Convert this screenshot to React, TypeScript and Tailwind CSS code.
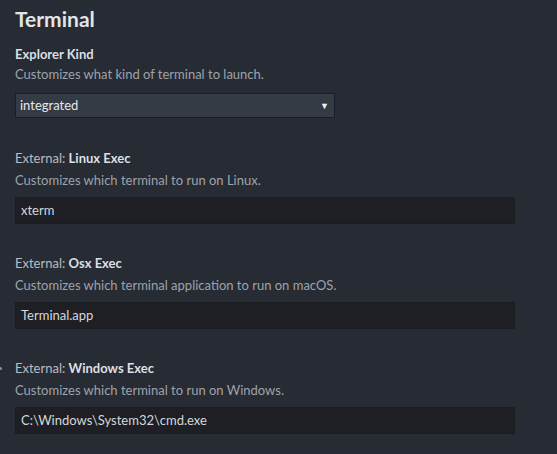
import React from "react";

const font = { fontFamily: 'Lato, "Open Sans", sans-serif' };

function Block({ prefix, name, desc, value, last }: { prefix?: string; name: string; desc: string; value: string; last?: boolean }) {
  return (
    <div className={last ? "" : "mb-[29px]"}>
      <div className="h-5 leading-5 text-[13px] text-[#b9bdc4]">
        {prefix && <span>{prefix} </span>}
        <span className="font-bold text-[#dcdfe4]">{name}</span>
      </div>
      <div className="mt-[2px] h-5 leading-5 text-[13px] text-[#9ea3ab]">{desc}</div>
      <div className="mt-[7px] h-[27px] w-[500px] bg-[#1d1f24] border border-[#1a1c20] flex items-center pl-[5px] text-[13px] text-[#d4d7dc]">
        {value}
      </div>
    </div>
  );
}

export default function App() {
  return (
    <div className="relative w-[557px] h-[454px] bg-[#272b33] overflow-hidden pl-[15px] pt-[6px]" style={font}>
      <div className="h-[26px] leading-[26px] text-[21px] font-bold text-[#e2e4e8]">Terminal</div>
      <div className="mt-[12px] h-5 leading-5 text-[13px] font-bold text-[#dcdfe4]">Explorer Kind</div>
      <div className="mt-0 h-5 leading-5 text-[13px] text-[#9ea3ab]">Customizes what kind of terminal to launch.</div>
      <div className="mt-[9px] h-[25px] w-[320px] bg-[#353b45] border border-[#1b1e23] flex items-center justify-between pl-[4px] pr-[5px] text-[13px] text-[#e6e8ec]">
        <span>integrated</span>
        <span className="text-[9px] text-[#f0f0f0]">▼</span>
      </div>
      <div className="mt-[30px]">
        <Block prefix="External:" name="Linux Exec" desc="Customizes which terminal to run on Linux." value="xterm" />
        <Block prefix="External:" name="Osx Exec" desc="Customizes which terminal application to run on macOS." value="Terminal.app" />
        <Block prefix="External:" name="Windows Exec" desc="Customizes which terminal to run on Windows." value="C:\Windows\System32\cmd.exe" last />
      </div>
      <div className="absolute left-[-1px] top-[367px] w-[3px] h-[3px] rounded-full bg-[#8a8f98]" />
    </div>
  );
}
